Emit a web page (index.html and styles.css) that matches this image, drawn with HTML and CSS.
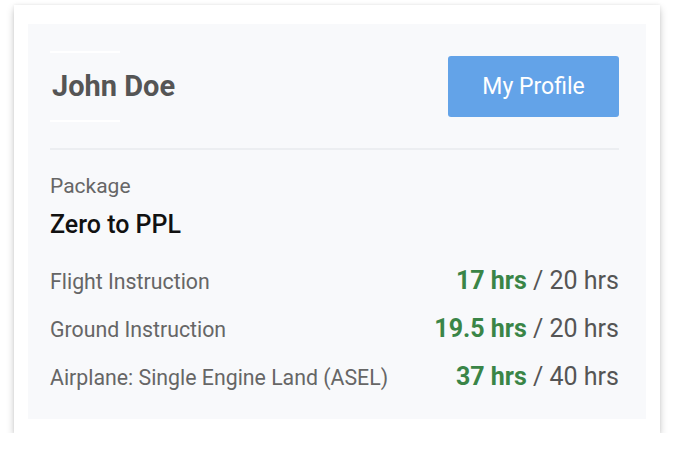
FILE: index.html
```html
<!DOCTYPE html>
<html>
<head>
<meta charset="utf-8">
<link rel="stylesheet" href="styles.css">
</head>
<body>
<div class="card">
  <div class="panel">
    <div class="header">
      <div class="name-wrap">
        <h1 class="name">John Doe</h1>
      </div>
      <button class="btn">My Profile</button>
    </div>
    <div class="divider"></div>
    <div class="label">Package</div>
    <div class="package">Zero to PPL</div>
    <div class="rows">
      <div class="row"><span class="row-label">Flight Instruction</span><span class="row-val"><span class="done">17 hrs</span> / 20 hrs</span></div>
      <div class="row"><span class="row-label">Ground Instruction</span><span class="row-val"><span class="done">19.5 hrs</span> / 20 hrs</span></div>
      <div class="row"><span class="row-label">Airplane: Single Engine Land (ASEL)</span><span class="row-val"><span class="done">37 hrs</span> / 40 hrs</span></div>
    </div>
  </div>
</div>
</body>
</html>
```

FILE: styles.css
```css
* { box-sizing: border-box; }
html, body { margin: 0; padding: 0; background: #ffffff; }
body {
  font-family: Roboto, "Liberation Sans", sans-serif;
  padding: 5px 14px 0 14px;
}
.card {
  width: 646px;
  height: 428px;
  background: #ffffff;
  padding: 19px 14px 14px 14px;
  box-shadow: 0 4px 8px rgba(0,0,0,0.2), 0 0 3px rgba(0,0,0,0.08);
}
.panel {
  background: #f8f9fb;
  height: 100%;
  padding: 0 27px 0 22px;
}
.header {
  display: flex;
  justify-content: space-between;
  align-items: center;
  height: 124px;
}
.name-wrap {
  border-top: 2px solid #ffffff;
  border-bottom: 2px solid #ffffff;
  width: 70px;
  height: 71px;
  display: flex;
  align-items: center;
  overflow: visible;
  white-space: nowrap;
}
.name {
  margin: 0 0 0 2px;
  font-size: 29px;
  font-weight: 700;
  color: #555555;
}
.btn {
  width: 171px;
  height: 61px;
  background: #63a3e8;
  border: none;
  border-radius: 3px;
  color: #ffffff;
  font-family: inherit;
  font-size: 23px;
  font-weight: 400;
}
.divider {
  height: 2px;
  background: #eceef1;
}
.label {
  margin-top: 24px;
  font-size: 21px;
  color: #666666;
  line-height: 24px;
}
.package {
  margin-top: 13px;
  font-size: 25px;
  font-weight: 500;
  color: #111111;
  line-height: 28px;
}
.rows {
  margin-top: 28px;
  display: flex;
  flex-direction: column;
  gap: 20px;
}
.row {
  display: flex;
  justify-content: space-between;
  align-items: baseline;
  height: 28px;
  line-height: 28px;
}
.row-label {
  font-size: 21.3px;
  color: #666666;
}
.row-val {
  font-size: 25px;
  color: #555555;
}
.done {
  color: #3a8547;
  font-weight: 700;
}
```
